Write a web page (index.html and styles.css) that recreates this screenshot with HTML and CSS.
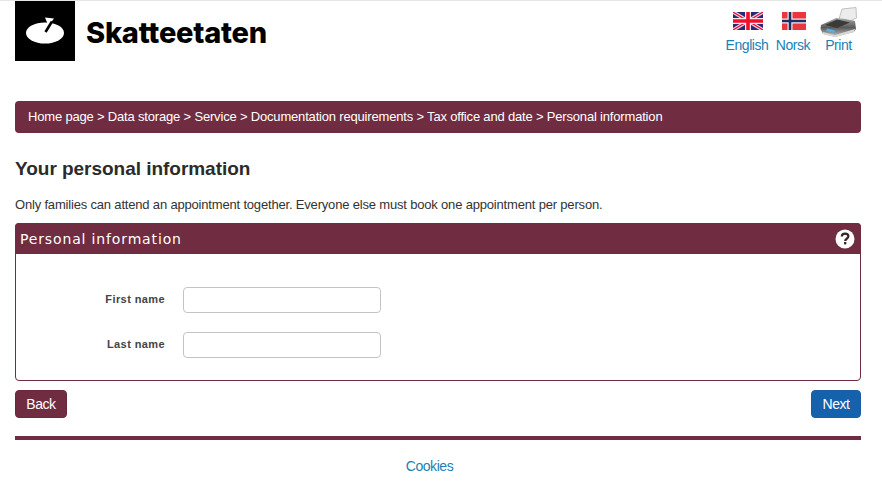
FILE: index.html
```html
<!DOCTYPE html>
<html lang="en">
<head>
<meta charset="utf-8">
<title>Your personal information</title>
<link rel="stylesheet" href="styles.css">
</head>
<body>
<div class="page">
  <header class="top">
    <div class="brand">
      <div class="logo">
        <svg width="60" height="60" viewBox="0 0 60 60">
          <ellipse cx="30" cy="32" rx="19" ry="10.500" fill="#fff"/>
          <path d="M30 16.500L39 17.500 33.500 25z" fill="#fff"/>
          <path d="M30.500 31L37 20.500" stroke="#000" stroke-width="2.600" fill="none"/>
        </svg>
      </div>
      <span class="wordmark">Skatteetaten</span>
    </div>
    <nav class="tools">
      <a class="tool" href="#">
        <svg class="flag flag-uk" width="30" height="18" viewBox="0 0 30 18">
          <rect width="30" height="18" fill="#2a2a72"/>
          <path d="M0 0L30 18M30 0L0 18" stroke="#f0d6de" stroke-width="3.600"/>
          <path d="M0 0L30 18M30 0L0 18" stroke="#e0103a" stroke-width="1.200"/>
          <path d="M15 0V18M0 9H30" stroke="#fbe8ec" stroke-width="6"/>
          <path d="M15 0V18M0 9H30" stroke="#f0102c" stroke-width="3.600"/>
        </svg>
        <span>English</span>
      </a>
      <a class="tool" href="#">
        <svg class="flag flag-no" width="24" height="18" viewBox="0 0 24 18">
          <rect width="24" height="18" fill="#e8373f"/>
          <path d="M8 0V18M0 9H24" stroke="#f2eef0" stroke-width="5"/>
          <path d="M8 0V18M0 9H24" stroke="#1c2f66" stroke-width="2.600"/>
        </svg>
        <span>Norsk</span>
      </a>
      <a class="tool tool-print" href="#">
        <svg class="printer" width="37" height="30" viewBox="0 0 37 30">
          <defs>
            <linearGradient id="pb" x1="0" y1="0" x2="0" y2="1">
              <stop offset="0" stop-color="#a8a8a8"/>
              <stop offset=".5" stop-color="#5a5a5a"/>
              <stop offset="1" stop-color="#c4c4c4"/>
            </linearGradient>
          </defs>
          <path fill="#ececec" stroke="#a9a9a9" stroke-width=".7" d="M22 2L36 0.500 36.500 11 26 16 19 12z"/>
          <path fill="url(#pb)" d="M1 18L16 11 25 12 35 14 36 22 34 25 15 30 3 27 0.500 22z"/>
          <path fill="#3a3a3a" d="M5 18L17 12.500 30 15.500 17 21z"/>
          <path fill="#d8d8d8" d="M3 25L15 28 35 22 34 25 15 30 3 27z"/>
          <path fill="#56b0e6" d="M7 21.500l8 2-1 2.500-8-2z"/>
        </svg>
        <span>Print</span>
      </a>
    </nav>
  </header>

  <div class="crumbs">Home page &gt; Data storage &gt; Service &gt; Documentation requirements &gt; Tax office and date &gt; Personal information</div>

  <h1 class="title">Your personal information</h1>
  <p class="intro">Only families can attend an appointment together. Everyone else must book one appointment per person.</p>

  <section class="panel">
    <div class="panel-head">
      <h2 class="panel-title">Personal information</h2>
      <svg class="help" width="20" height="20" viewBox="0 0 20 20">
        <circle cx="10" cy="10" r="9.500" fill="#fff"/>
        <path d="M6.800 7.600c0-2 1.500-3 3.300-3 1.900 0 3.300 1 3.300 2.700 0 2.500-3.200 2.400-3.200 4.600" fill="none" stroke="#3c2229" stroke-width="2.200"/>
        <rect x="9" y="13" width="2.300" height="2.400" fill="#3c2229"/>
      </svg>
    </div>
    <form class="panel-body">
      <div class="field">
        <label class="field-label" for="first">First name</label>
        <input class="field-input" id="first" type="text">
      </div>
      <div class="field">
        <label class="field-label" for="last">Last name</label>
        <input class="field-input" id="last" type="text">
      </div>
    </form>
  </section>

  <div class="actions">
    <button class="btn btn-back" type="button">Back</button>
    <button class="btn btn-next" type="button">Next</button>
  </div>

  <footer class="foot">
    <a href="#">Cookies</a>
  </footer>
</div>
</body>
</html>
```
FILE: styles.css
```css
* { box-sizing: border-box; }
html, body { margin: 0; padding: 0; background: #fff; }
body {
  font-family: "Liberation Sans", Arial, sans-serif;
  font-size: 13px;
  letter-spacing: -.18px;
  color: #333;
  border-top: 1px solid #e6e6e6;
  overflow: hidden;
}
.page { width: 846px; margin-left: 15px; }
a { color: #1b7fb5; text-decoration: none; }

.top { display: flex; justify-content: space-between; height: 100px; }
.brand { display: flex; align-items: flex-start; }
.logo { width: 60px; height: 60px; background: #000; }
.logo svg { display: block; }
.wordmark {
  margin: 14px 0 0 11px;
  font-family: "Inter", "Liberation Sans", sans-serif;
  font-weight: 800;
  font-size: 29px;
  line-height: 35px;
  color: #000;
  letter-spacing: -.25px;
}
.tools { display: flex; align-items: flex-start; }
.tool { display: flex; flex-direction: column; align-items: center; width: 46px; line-height: 16px; font-size: 14px; letter-spacing: -.45px; }
.flag { display: block; margin: 11px 0 7px; }
.flag-uk, .flag-no { margin-left: 2px; }
.printer { display: block; margin: 6px 0 0; }
.tool-print { width: 45px; }

.crumbs {
  height: 32px;
  padding-left: 13px;
  background: #702c40;
  border-radius: 4px;
  color: #fff;
  line-height: 31px;
}
.title { margin: 24px 0 0; font-size: 19px; line-height: 23px; font-weight: 700; color: #2b2b2b; letter-spacing: -.03px; }
.intro { margin: 17px 0 0; line-height: 16px; color: #333; }

.panel { margin-top: 10px; border: 1px solid #702c40; border-radius: 4px; height: 158px; }
.panel-head {
  display: flex; align-items: center; justify-content: space-between;
  height: 31px; margin: -1px -1px 0; padding: 0 6px 0 5px;
  background: #702c40; border-radius: 4px 4px 0 0;
}
.panel-title {
  margin: 0;
  font-family: "DejaVu Sans", sans-serif;
  font-weight: 400;
  font-size: 14px;
  letter-spacing: .85px;
  color: #fff;
}
.help { display: block; }
.panel-body { padding-top: 33px; }
.field { display: flex; align-items: center; height: 26px; margin-bottom: 19px; }
.field-label {
  width: 149px;
  padding-bottom: 2px;
  text-align: right;
  font-size: 11px;
  font-weight: 700;
  letter-spacing: .4px;
  color: #444;
}
.field-input {
  margin-left: 18px;
  width: 198px;
  height: 26px;
  padding: 0 8px;
  border: 1px solid #c4c4c4;
  border-radius: 4px;
  background: #fff;
  outline: none;
}

.actions { display: flex; justify-content: space-between; margin-top: 9px; }
.btn {
  height: 28px;
  padding: 0;
  border-radius: 4px;
  color: #fff;
  font-family: "Liberation Sans", Arial, sans-serif;
  font-size: 14px;
  letter-spacing: -.45px;
}
.btn-back { width: 52px; background: #702c40; border: 1px solid #6a263a; }
.btn-next { width: 50px; background: #1561ab; border: 1px solid #1a5fa3; }

.foot { margin-top: 18px; border-top: 4px solid #702c40; padding: 18px 17px 0 0; text-align: center; line-height: 16px; font-size: 14px; letter-spacing: -.45px; }
```
